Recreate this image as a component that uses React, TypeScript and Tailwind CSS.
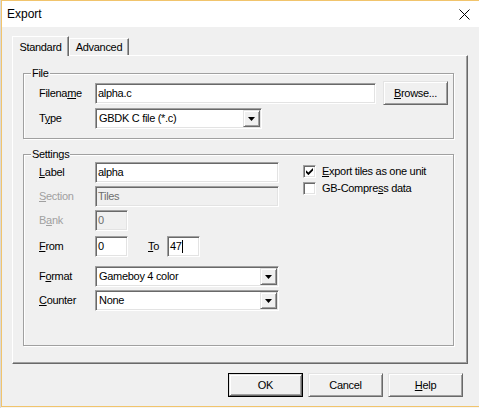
import React from 'react';

const sunken =
  'border border-t-[#a0a0a0] border-l-[#a0a0a0] border-r-white border-b-white shadow-[inset_1px_1px_0_#696969,inset_-1px_-1px_0_#e3e3e3]';
const raised =
  'border border-t-[#e3e3e3] border-l-[#e3e3e3] border-r-[#696969] border-b-[#696969] shadow-[inset_1px_1px_0_#ffffff,inset_-1px_-1px_0_#a0a0a0]';
const group =
  'w-[431px] border border-[#a0a0a0] shadow-[inset_1px_1px_0_#ffffff,1px_1px_0_#ffffff]';

const Mn = ({ text, at }: { text: string; at?: number }) => {
  if (at === undefined) return <>{text}</>;
  return (
    <>
      {text.slice(0, at)}
      <span className="underline underline-offset-[1px]">{text[at]}</span>
      {text.slice(at + 1)}
    </>
  );
};

const Arrow = () => (
  <svg width="7" height="4" viewBox="0 0 7 4">
    <polygon points="0,0 7,0 3.5,4" fill="#000" />
  </svg>
);

const Edit = ({
  w,
  value,
  disabled,
  caret,
}: {
  w: string;
  value: string;
  disabled?: boolean;
  caret?: boolean;
}) => (
  <div
    className={`${sunken} ${w} h-[21px] flex items-center pl-[2px] ${
      disabled ? 'bg-[#f0f0f0] text-[#6d6d6d]' : 'bg-white'
    }`}
  >
    {value}
    {caret && <span className="inline-block w-px h-[13px] bg-black" />}
  </div>
);

const Combo = ({ w, value }: { w: string; value: string }) => (
  <div className={`${sunken} ${w} h-[21px] flex items-center p-[1px] bg-white`}>
    <div className="flex-1 pl-[2px] whitespace-nowrap overflow-hidden">{value}</div>
    <div className={`${raised} bg-[#f0f0f0] w-[17px] h-[17px] flex items-center justify-center`}>
      <Arrow />
    </div>
  </div>
);

const Check = ({ checked, text, at }: { checked?: boolean; text: string; at: number }) => (
  <div className="flex items-center h-[17px]">
    <div className={`${sunken} bg-white w-[13px] h-[13px] flex items-center justify-center`}>
      {checked && (
        <svg width="7" height="7" viewBox="0 0 7 7">
          <path d="M0 2.2 L2.4 4.6 L7 0 V2.6 L2.4 7.2 L0 4.8 Z" fill="#000" />
        </svg>
      )}
    </div>
    <span className="ml-[6px] whitespace-nowrap">
      <Mn text={text} at={at} />
    </span>
  </div>
);

const Label = ({ text, at, disabled, w = 'w-[56px]' }: { text: string; at: number; disabled?: boolean; w?: string }) => (
  <div className={`${w} shrink-0 ${disabled ? 'text-[#a0a0a0]' : ''}`}>
    <Mn text={text} at={at} />
  </div>
);

const Button = ({ text, at, isDefault, w = 'w-[75px]' }: { text: string; at?: number; isDefault?: boolean; w?: string }) =>
  isDefault ? (
    <div className={`${w} h-[24px] border border-[#000000]`}>
      <div className={`${raised} w-full h-full flex items-center justify-center`}>
        <Mn text={text} at={at} />
      </div>
    </div>
  ) : (
    <div className={`${raised} ${w} h-[24px] flex items-center justify-center`}>
      <Mn text={text} at={at} />
    </div>
  );

export default function App() {
  return (
    <div className="w-[479px] h-[408px] flex items-start bg-[#f5f5f5] overflow-hidden font-['Liberation_Sans',Arial,sans-serif] text-[11px] leading-[13px] tracking-[-0.3px] text-black">
      <div className="w-px h-full bg-[#d9d9d9]" />
      <div className="flex-1 h-[407px] flex flex-col bg-[#f0f0f0] border-l border-t border-b border-[#f1c46c]">
        <div className="h-[26px] bg-white flex items-center justify-between pl-[5px] pr-[9px] text-[12px] tracking-normal">
          <span>Export</span>
          <svg width="11" height="11" viewBox="0 0 11 11">
            <path d="M0.5 0.5 L10.5 10.5 M10.5 0.5 L0.5 10.5" stroke="#000" strokeWidth="1" />
          </svg>
        </div>

        <div className="flex-1 flex flex-col pt-[9px] pl-[10px]">
          <div className="flex items-end">
            <div className="relative z-10 -mb-px w-[57px] h-[20px] bg-[#f0f0f0] border-l border-t border-t-white border-l-white border-r border-r-[#696969] shadow-[inset_-1px_0_0_#a0a0a0] flex items-start justify-center pt-[4px]">
              Standard
            </div>
            <div className="w-[60px] h-[17px] border-l border-t border-t-white border-l-white border-r border-r-[#696969] shadow-[inset_-1px_0_0_#a0a0a0] flex items-center justify-center">
              Advanced
            </div>
          </div>

          <div className="w-[456px] h-[309px] border border-t-white border-l-white border-r-[#696969] border-b-[#696969] shadow-[inset_-1px_-1px_0_#a0a0a0] pt-[11px] pl-[10px] flex flex-col gap-[9px]">
            <fieldset className={group}>
              <legend className="ml-[7px] px-[1px] bg-[#f0f0f0]">File</legend>
              <div className="pl-[15px] pt-[1px] pb-[9px] flex flex-col gap-[3px]">
                <div className="flex items-center">
                  <Label text="Filename" at={6} />
                  <Edit w="w-[281px]" value="alpha.c" />
                  <div className="ml-[7px]">
                    <Button text="Browse..." at={0} w="w-[65px]" />
                  </div>
                </div>
                <div className="flex items-center">
                  <Label text="Type" at={1} />
                  <Combo w="w-[167px]" value="GBDK C file (*.c)" />
                </div>
              </div>
            </fieldset>

            <fieldset className={group}>
              <legend className="ml-[7px] px-[1px] bg-[#f0f0f0]">Settings</legend>
              <div className="pl-[15px] pt-[1px] pb-[34px] flex">
                <div className="w-[240px] flex flex-col">
                  <div className="flex items-center">
                    <Label text="Label" at={0} />
                    <Edit w="w-[184px]" value="alpha" />
                  </div>
                  <div className="flex items-center mt-[3px]">
                    <Label text="Section" at={0} disabled />
                    <Edit w="w-[184px]" value="Tiles" disabled />
                  </div>
                  <div className="flex items-center mt-[3px]">
                    <Label text="Bank" at={1} disabled />
                    <Edit w="w-[33px]" value="0" disabled />
                  </div>
                  <div className="flex items-center mt-[5px]">
                    <Label text="From" at={0} />
                    <Edit w="w-[33px]" value="0" />
                    <div className="ml-[20px]">
                      <Label text="To" at={0} w="w-[19px]" />
                    </div>
                    <Edit w="w-[33px]" value="47" caret />
                  </div>
                  <div className="flex items-center mt-[9px]">
                    <Label text="Format" at={1} />
                    <Combo w="w-[184px]" value="Gameboy 4 color" />
                  </div>
                  <div className="flex items-center mt-[3px]">
                    <Label text="Counter" at={0} />
                    <Combo w="w-[184px]" value="None" />
                  </div>
                </div>
                <div className="ml-[24px] pt-[1px] flex flex-col">
                  <Check checked text="Export tiles as one unit" at={0} />
                  <Check text="GB-Compress data" at={9} />
                </div>
              </div>
            </fieldset>
          </div>

          <div className="mt-[9px] flex justify-end gap-[5px] pr-[16px]">
            <Button text="OK" isDefault />
            <Button text="Cancel" />
            <Button text="Help" at={0} />
          </div>
        </div>
      </div>
    </div>
  );
}
